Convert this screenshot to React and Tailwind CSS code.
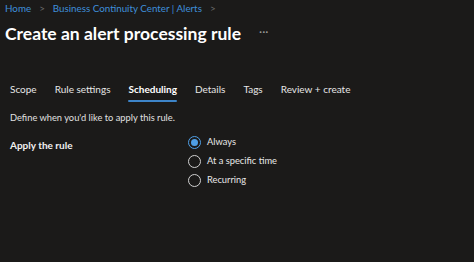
import React from "react";

function Radio({ checked, label }) {
  return (
    <div className="flex items-center gap-[6px] h-[19px]">
      {checked ? (
        <span className="w-[13px] h-[13px] rounded-full border border-[#4f9fe6] flex items-center justify-center">
          <span className="w-[7px] h-[7px] rounded-full bg-[#4f9fe6]" />
        </span>
      ) : (
        <span className="w-[13px] h-[13px] rounded-full border border-[#d0d0d0]" />
      )}
      <span className="text-[9.3px] text-[#e8e8e8]">{label}</span>
    </div>
  );
}

export default function App() {
  const tabs = ["Scope", "Rule settings", "Scheduling", "Details", "Tags", "Review + create"];
  return (
    <div
      className="w-[474px] h-[262px] bg-[#1b1a19] overflow-hidden text-white"
      style={{ fontFamily: "Lato, 'Noto Sans', sans-serif" }}
    >
      <div className="flex items-center gap-[8px] pl-[5px] pt-[1px] h-[16px] text-[9.8px] text-[#3f8fd9]">
        <span>Home</span>
        <span className="text-[#6b6b6b]">&gt;</span>
        <span>Business Continuity Center | Alerts</span>
        <span className="text-[#6b6b6b]">&gt;</span>
      </div>
      <div className="flex items-center pl-[5px] mt-[3px] h-[30px]">
        <span className="text-[17.5px] font-bold text-white">Create an alert processing rule</span>
        <span className="ml-[18px] text-[12px] text-[#9a9a9a] -mt-[4px]">···</span>
      </div>
      <div className="flex pl-[10px] mt-[33px] gap-[18px] text-[10px] text-[#e6e6e6]">
        {tabs.map((t) => (
          <div key={t} className="flex flex-col">
            <span className={t === "Scheduling" ? "font-bold text-white" : ""}>{t}</span>
            <span className={"mt-[3px] h-[2px] rounded " + (t === "Scheduling" ? "bg-[#3d84c8]" : "bg-transparent")} />
          </div>
        ))}
      </div>
      <div className="pl-[10px] mt-[9px] text-[9.3px] text-[#e0e0e0]">Define when you'd like to apply this rule.</div>
      <div className="flex pl-[10px] mt-[8px]">
        <div className="w-[178px] text-[10px] font-bold text-[#f0f0f0] pt-[5px]">Apply the rule</div>
        <div className="flex flex-col">
          <Radio checked label="Always" />
          <Radio label="At a specific time" />
          <Radio label="Recurring" />
        </div>
      </div>
    </div>
  );
}
